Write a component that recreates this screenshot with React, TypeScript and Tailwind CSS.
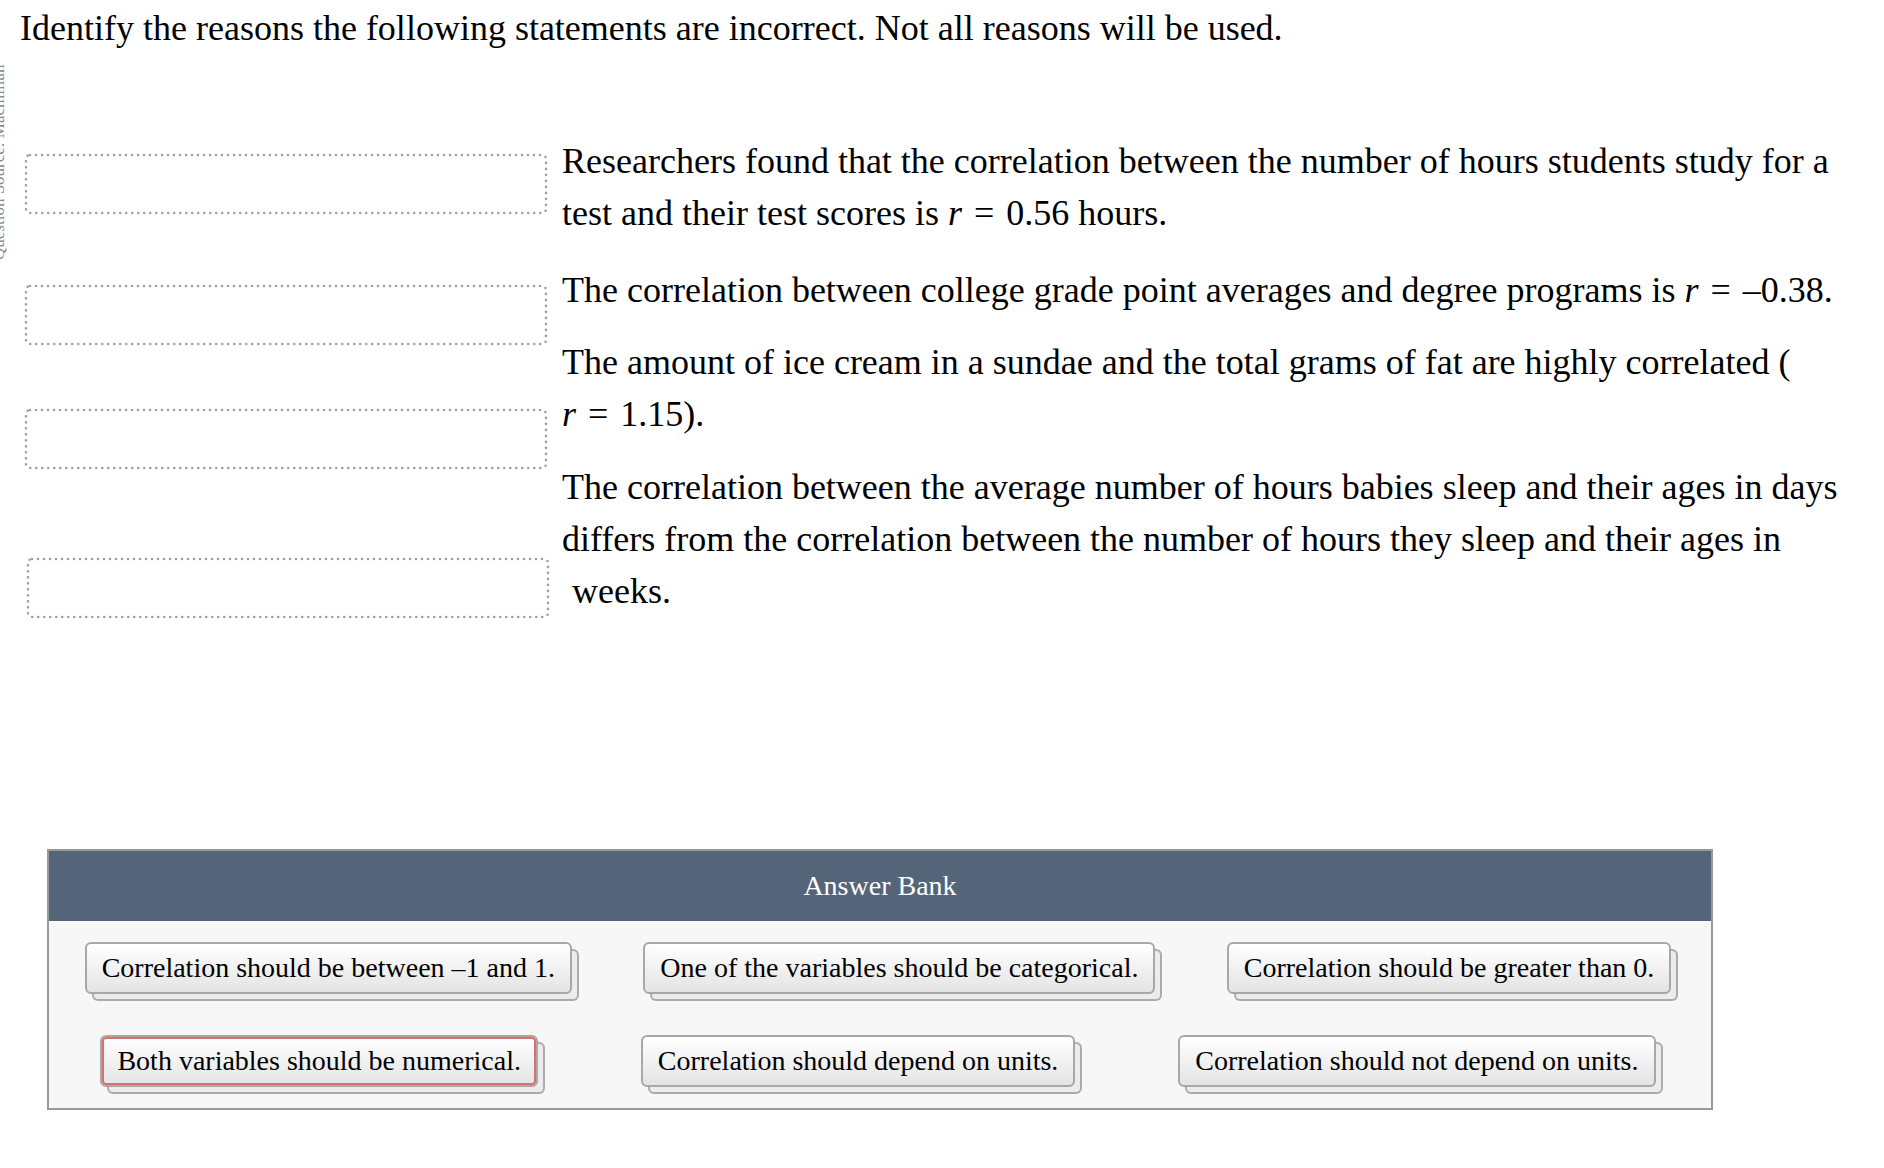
import React from "react";

const answers: { label: string; picked?: boolean }[][] = [
  [
    { label: "Correlation should be between –1 and 1." },
    { label: "One of the variables should be categorical." },
    { label: "Correlation should be greater than 0." },
  ],
  [
    { label: "Both variables should be numerical.", picked: true },
    { label: "Correlation should depend on units." },
    { label: "Correlation should not depend on units." },
  ],
];

// dotted drop target; the dots are an svg overlay so they sit round and sparse
function DropBox({ className = "" }: { className?: string }) {
  return (
    <div className={`relative h-[62px] w-[524px] ${className}`}>
      <svg className="absolute inset-0 h-full w-full" aria-hidden>
        <rect
          x="2"
          y="2"
          width="520"
          height="58"
          rx="4"
          fill="none"
          stroke="#9f9f9f"
          strokeWidth="2.6"
          strokeDasharray="0 6"
          strokeLinecap="round"
        />
      </svg>
    </div>
  );
}

function Chip({ label, picked }: { label: string; picked?: boolean }) {
  return (
    <div className="pr-[8px] pb-[8px]">
      <div
        className={`rounded-[6px] border-2 border-[#a8a8a8] bg-linear-to-b from-white to-[#e4e4e4] px-[15px] py-[8px] text-[28px] leading-[32px] whitespace-nowrap ${
          picked
            ? "shadow-[inset_0_0_0_2px_#d96f6f,7px_7px_0_-2px_#ececec,7px_7px_0_0_#ababab]"
            : "shadow-[7px_7px_0_-2px_#ececec,7px_7px_0_0_#ababab]"
        }`}
      >
        {label}
      </div>
    </div>
  );
}

const R = () => <i>r</i>;
const Eq = () => <span className="px-[3px]">=</span>;

export default function App() {
  return (
    <div className="relative min-h-screen overflow-hidden bg-white font-['Liberation_Serif','Times_New_Roman',serif] text-black">
      {/* side label, mostly off the left edge */}
      <div className="absolute left-[-13px] top-[30px] h-[230px] overflow-hidden border-r-2 border-dotted border-[#9a9a9a] pr-[1px] text-[17px] leading-[18px] text-[#8a8a8a] [writing-mode:vertical-rl] rotate-180">
        Question Source: Macmillan
      </div>

      <h1 className="pl-[20px] pt-[8px] text-[36px] font-normal leading-[40px]">
        Identify the reasons the following statements are incorrect. Not all reasons will be used.
      </h1>

      <div className="mt-[87px] flex">
        <div className="flex w-[562px] shrink-0 flex-col pl-[24px]">
          <DropBox className="mt-[18px]" />
          <DropBox className="mt-[69px]" />
          <DropBox className="mt-[62px]" />
          <DropBox className="ml-[2px] mt-[87px]" />
        </div>

        <div className="flex flex-col text-[36px] leading-[52px] whitespace-nowrap">
          <p>
            Researchers found that the correlation between the number of hours students study for a
            <br />
            test and their test scores is <R /> <Eq /> 0.56 hours.
          </p>
          <p className="mt-[25px]">
            The correlation between college grade point averages and degree programs is <R /> <Eq /> –0.38.
          </p>
          <p className="mt-[20px]">
            The amount of ice cream in a sundae and the total grams of fat are highly correlated (
            <br />
            <R /> <Eq /> 1.15).
          </p>
          <p className="mt-[21px]">
            The correlation between the average number of hours babies sleep and their ages in days
            <br />
            differs from the correlation between the number of hours they sleep and their ages in
            <br />
            <span className="pl-[10px]">weeks.</span>
          </p>
        </div>
      </div>

      <div className="ml-[47px] mt-[230px] w-[1666px] border-2 border-[#999999] bg-[#f7f7f7]">
        <div className="flex h-[70px] items-center justify-center bg-[#556579] text-[28px] text-white">
          Answer Bank
        </div>
        <div className="flex flex-col gap-[33px] pb-[13px] pl-[4px] pt-[21px]">
          {answers.map((row, i) => (
            <div key={i} className="flex justify-around">
              {row.map((a) => (
                <Chip key={a.label} label={a.label} picked={a.picked} />
              ))}
            </div>
          ))}
        </div>
      </div>
    </div>
  );
}
